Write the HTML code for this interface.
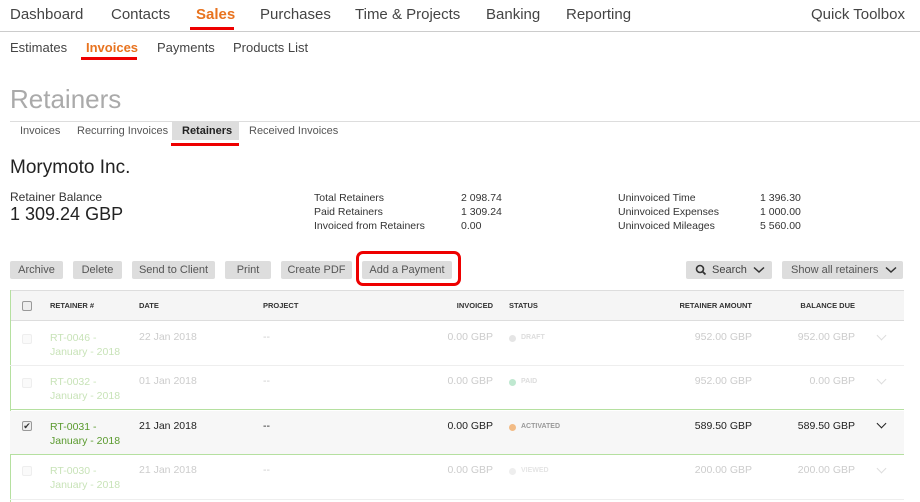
<!DOCTYPE html><html><head><style>
*{margin:0;padding:0;box-sizing:border-box}
body{width:920px;height:502px;overflow:hidden;background:#fff;font-family:"Liberation Sans",sans-serif;color:#333;position:relative}
.a{position:absolute;white-space:nowrap}
.n{font-size:15px;color:#444;top:6px}
.s{font-size:13px;color:#444;top:40px}
.t{font-size:11px;color:#555;top:125px}
.l{font-size:10.5px;color:#333}
.b{position:absolute;top:261px;height:18px;background:#ddd;border-radius:2px;font-size:11px;color:#555;text-align:center;line-height:18px}
.h{font-size:7.5px;font-weight:bold;color:#333;top:301px}
.r{position:absolute;left:10px;width:894px;border-bottom:1px solid #eee}
.c{font-size:10.5px}
.g{color:#ccc}
.ri{right:427px}.ra{right:168px}.rb{right:65px}
.cb{position:absolute;left:22px;width:10px;height:10px;border:1px solid #ccc;border-radius:2px;background:#f5f5f5}
.dot{position:absolute;width:7px;height:7px;border-radius:50%}
.st{font-size:7px;font-weight:bold}
.chev{position:absolute;left:878px;width:7px;height:7px;border-right:1.3px solid #ccc;border-bottom:1.3px solid #ccc;transform:rotate(45deg)}
</style></head><body>
<div class="a n" style="left:10px">Dashboard</div>
<div class="a n" style="left:111px">Contacts</div>
<div class="a n" style="left:196px;color:#e8731f;font-weight:bold">Sales</div>
<div class="a n" style="left:260px">Purchases</div>
<div class="a n" style="left:355px">Time &amp; Projects</div>
<div class="a n" style="left:486px">Banking</div>
<div class="a n" style="left:566px">Reporting</div>
<div class="a n" style="left:811px">Quick Toolbox</div>
<div class="a" style="left:190px;top:27px;width:44px;height:3px;background:#e00"></div>
<div class="a" style="left:0;top:31px;width:920px;height:1px;background:#ccc"></div>
<div class="a s" style="left:10px">Estimates</div>
<div class="a s" style="left:86px;color:#e8731f;font-weight:bold">Invoices</div>
<div class="a s" style="left:157px">Payments</div>
<div class="a s" style="left:233px">Products List</div>
<div class="a" style="left:81px;top:57px;width:56px;height:3px;background:#e00"></div>
<div class="a" style="left:10px;top:84px;font-size:26px;color:#aaa">Retainers</div>
<div class="a" style="left:10px;top:121px;width:910px;height:1px;background:#ddd"></div>
<div class="a" style="left:172px;top:122px;width:67px;height:18px;background:#ddd"></div>
<div class="a t" style="left:20px">Invoices</div>
<div class="a t" style="left:77px">Recurring Invoices</div>
<div class="a t" style="left:182px;font-weight:bold;color:#222">Retainers</div>
<div class="a t" style="left:249px">Received Invoices</div>
<div class="a" style="left:171px;top:143px;width:68px;height:3px;background:#e00"></div>
<div class="a" style="left:10px;top:157px;font-size:19px;color:#222">Morymoto Inc.</div>
<div class="a" style="left:10px;top:190px;font-size:12px">Retainer Balance</div>
<div class="a" style="left:10px;top:204px;font-size:18px;color:#222">1 309.24 GBP</div>
<div class="a l" style="left:314px;top:191px;line-height:14px">Total Retainers<br>Paid Retainers<br>Invoiced from Retainers</div>
<div class="a l" style="left:461px;top:191px;line-height:14px">2 098.74<br>1 309.24<br>0.00</div>
<div class="a l" style="left:618px;top:191px;line-height:14px">Uninvoiced Time<br>Uninvoiced Expenses<br>Uninvoiced Mileages</div>
<div class="a l" style="left:760px;top:191px;line-height:14px">1 396.30<br>1 000.00<br>5 560.00</div>
<div class="b" style="left:10px;width:53px">Archive</div>
<div class="b" style="left:73px;width:49px">Delete</div>
<div class="b" style="left:132px;width:83px">Send to Client</div>
<div class="b" style="left:225px;width:46px">Print</div>
<div class="b" style="left:281px;width:71px">Create PDF</div>
<div class="b" style="left:362px;width:90px">Add a Payment</div>
<div class="a" style="left:356px;top:251px;width:105px;height:35px;border:3.5px solid #e00;border-radius:7px"></div>
<div class="b" style="left:686px;width:86px;color:#444;text-align:left;padding-left:26px">Search</div>
<svg class="a" style="left:695px;top:264px" width="12" height="12"><circle cx="5" cy="5" r="3.5" fill="none" stroke="#333" stroke-width="1.6"/><line x1="7.5" y1="7.5" x2="10.5" y2="10.5" stroke="#333" stroke-width="1.8"/></svg>
<div class="b" style="left:782px;width:121px;text-align:left;padding-left:9px">Show all retainers</div>
<svg class="a" style="left:753px;top:266px" width="12" height="8"><path d="M1 1.5L6 6L11 1.5" fill="none" stroke="#333" stroke-width="1.5"/></svg>
<svg class="a" style="left:885px;top:266px" width="12" height="8"><path d="M1 1.5L6 6L11 1.5" fill="none" stroke="#333" stroke-width="1.5"/></svg>
<div class="a" style="left:10px;top:290px;width:894px;height:31px;background:#f5f5f5;border-top:1px solid #ddd;border-bottom:1px solid #ddd"></div>
<div class="a" style="left:10px;top:290px;width:1px;height:212px;background:#b5e0a0"></div>
<div class="cb" style="top:301px;border-color:#999;background:#eee"></div>
<div class="a h" style="left:50px">RETAINER #</div>
<div class="a h" style="left:139px">DATE</div>
<div class="a h" style="left:263px">PROJECT</div>
<div class="a h ri">INVOICED</div>
<div class="a h" style="left:509px">STATUS</div>
<div class="a h ra">RETAINER AMOUNT</div>
<div class="a h rb">BALANCE DUE</div>

<div class="r" style="top:321px;height:45px"></div>
<div class="cb" style="top:334px;border-color:#eee;background:#fafafa"></div>
<div class="a c" style="left:50px;top:331px;color:#c8e3b8;line-height:14px">RT-0046 -<br>January - 2018</div>
<div class="a c g" style="left:139px;top:331px">22 Jan 2018</div>
<div class="a c g" style="left:263px;top:331px">--</div>
<div class="a c g ri" style="top:331px">0.00 GBP</div>
<div class="dot" style="left:509px;top:335px;background:#e5e5e5"></div>
<div class="a st" style="left:521px;top:334px;color:#ddd">DRAFT</div>
<div class="a c g ra" style="top:331px">952.00 GBP</div>
<div class="a c g rb" style="top:331px">952.00 GBP</div>
<div class="chev" style="top:332px;border-color:#ddd"></div>

<div class="r" style="top:366px;height:44px;border-bottom-color:#b5e0a0"></div>
<div class="cb" style="top:378px;border-color:#eee;background:#fafafa"></div>
<div class="a c" style="left:50px;top:375px;color:#c8e3b8;line-height:14px">RT-0032 -<br>January - 2018</div>
<div class="a c g" style="left:139px;top:375px">01 Jan 2018</div>
<div class="a c g" style="left:263px;top:375px">--</div>
<div class="a c g ri" style="top:375px">0.00 GBP</div>
<div class="dot" style="left:509px;top:379px;background:#bfe8d0"></div>
<div class="a st" style="left:521px;top:378px;color:#ddd">PAID</div>
<div class="a c g ra" style="top:375px">952.00 GBP</div>
<div class="a c g rb" style="top:375px">0.00 GBP</div>
<div class="chev" style="top:376px;border-color:#ddd"></div>

<div class="r" style="top:411px;height:44px;background:#f7f7f7;border-bottom-color:#b5e0a0"></div>
<div class="cb" style="top:421px;border-color:#999;background:#eee;font-size:9px;line-height:8px;text-align:center;color:#333">&#10004;</div>
<div class="a c" style="left:50px;top:420px;color:#5a9a2e;line-height:14px">RT-0031 -<br>January - 2018</div>
<div class="a c" style="left:139px;top:420px;color:#222">21 Jan 2018</div>
<div class="a c" style="left:263px;top:420px;color:#222">--</div>
<div class="a c ri" style="top:420px;color:#222">0.00 GBP</div>
<div class="dot" style="left:509px;top:424px;background:#f2bb85"></div>
<div class="a st" style="left:521px;top:423px;color:#999">ACTIVATED</div>
<div class="a c ra" style="top:420px;color:#222">589.50 GBP</div>
<div class="a c rb" style="top:420px;color:#222">589.50 GBP</div>
<div class="chev" style="top:420px;border-color:#222"></div>

<div class="r" style="top:455px;height:45px"></div>
<div class="cb" style="top:466px;border-color:#eee;background:#fafafa"></div>
<div class="a c" style="left:50px;top:464px;color:#c8e3b8;line-height:14px">RT-0030 -<br>January - 2018</div>
<div class="a c g" style="left:139px;top:464px">21 Jan 2018</div>
<div class="a c g" style="left:263px;top:464px">--</div>
<div class="a c g ri" style="top:464px">0.00 GBP</div>
<div class="dot" style="left:509px;top:468px;background:#eee"></div>
<div class="a st" style="left:521px;top:467px;color:#e5e5e5">VIEWED</div>
<div class="a c g ra" style="top:464px">200.00 GBP</div>
<div class="a c g rb" style="top:464px">200.00 GBP</div>
<div class="chev" style="top:465px;border-color:#ddd"></div>
</body></html>
